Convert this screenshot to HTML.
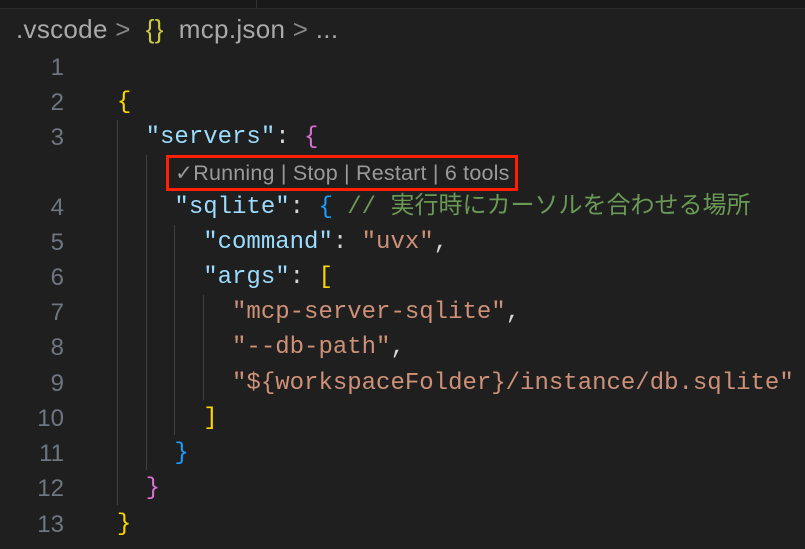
<!DOCTYPE html>
<html><head><style>
html,body{margin:0;padding:0;}
body{width:805px;height:549px;background:#1f1f1f;position:relative;overflow:hidden;font-family:"Liberation Mono",monospace;}
.top{position:absolute;left:0;top:0;width:805px;height:8px;background:#181818;border-bottom:1px solid #2b2b2b;}
.top i{position:absolute;left:256px;top:0;width:1px;height:8px;background:#333;}
.bc{position:absolute;left:16px;top:12px;font:26px "Liberation Sans",sans-serif;color:#a9a9a9;white-space:pre;line-height:34px;letter-spacing:0.3px;}
.ln{position:absolute;left:0;width:64px;text-align:right;color:#6e7681;font-size:24px;font-family:"Liberation Sans",sans-serif;line-height:35px;}
.code{position:absolute;left:88px;font-size:24px;white-space:pre;color:#d4d4d4;font-family:"Liberation Mono","Noto Sans CJK JP",monospace;line-height:35px;height:35px;}
.k{color:#9cdcfe}.s{color:#ce9178}.c{color:#6a9955}.y{color:#ffd700}.p{color:#da70d6}.b{color:#179fff}
.g{position:absolute;width:1px;background:#404040;}
.lens{position:absolute;left:166px;top:155px;width:340px;height:30px;border:3px solid #ff2000;font:21.5px "Liberation Sans",sans-serif;color:#9a9a9a;line-height:30px;padding-left:6px;white-space:pre;letter-spacing:0.2px;}
</style></head><body>
<div class="top"><i></i></div>
<div class="bc">.vscode <span style="color:#888">&gt;</span>  <span style="color:#cbcb41">{}</span>  mcp.json <span style="color:#888">&gt;</span> ...</div>

<div class="g" style="left:117px;top:120px;height:385px"></div>
<div class="g" style="left:146px;top:155px;height:315px"></div>
<div class="g" style="left:174px;top:225px;height:210px"></div>
<div class="g" style="left:203px;top:295px;height:105px"></div>

<div class="ln" style="top:50px">1</div>
<div class="ln" style="top:85px">2</div>
<div class="ln" style="top:120px">3</div>
<div class="ln" style="top:190px">4</div>
<div class="ln" style="top:225px">5</div>
<div class="ln" style="top:260px">6</div>
<div class="ln" style="top:295px">7</div>
<div class="ln" style="top:330px">8</div>
<div class="ln" style="top:366px">9</div>
<div class="ln" style="top:401px">10</div>
<div class="ln" style="top:436px">11</div>
<div class="ln" style="top:471px">12</div>
<div class="ln" style="top:507px">13</div>

<div class="code" style="top:85px">  <span class="y">{</span></div>
<div class="code" style="top:120px">    <span class="k">"servers"</span>: <span class="p">{</span></div>
<div class="lens">✓Running | Stop | Restart | 6 tools</div>
<div class="code" style="top:190px">      <span class="k">"sqlite"</span>: <span class="b">{</span> <span class="c">// 実行時にカーソルを合わせる場所</span></div>
<div class="code" style="top:225px">        <span class="k">"command"</span>: <span class="s">"uvx"</span>,</div>
<div class="code" style="top:260px">        <span class="k">"args"</span>: <span class="y">[</span></div>
<div class="code" style="top:295px">          <span class="s">"mcp-server-sqlite"</span>,</div>
<div class="code" style="top:330px">          <span class="s">"--db-path"</span>,</div>
<div class="code" style="top:366px">          <span class="s">"${workspaceFolder}/instance/db.sqlite"</span></div>
<div class="code" style="top:401px">        <span class="y">]</span></div>
<div class="code" style="top:436px">      <span class="b">}</span></div>
<div class="code" style="top:471px">    <span class="p">}</span></div>
<div class="code" style="top:507px">  <span class="y">}</span></div>
</body></html>
